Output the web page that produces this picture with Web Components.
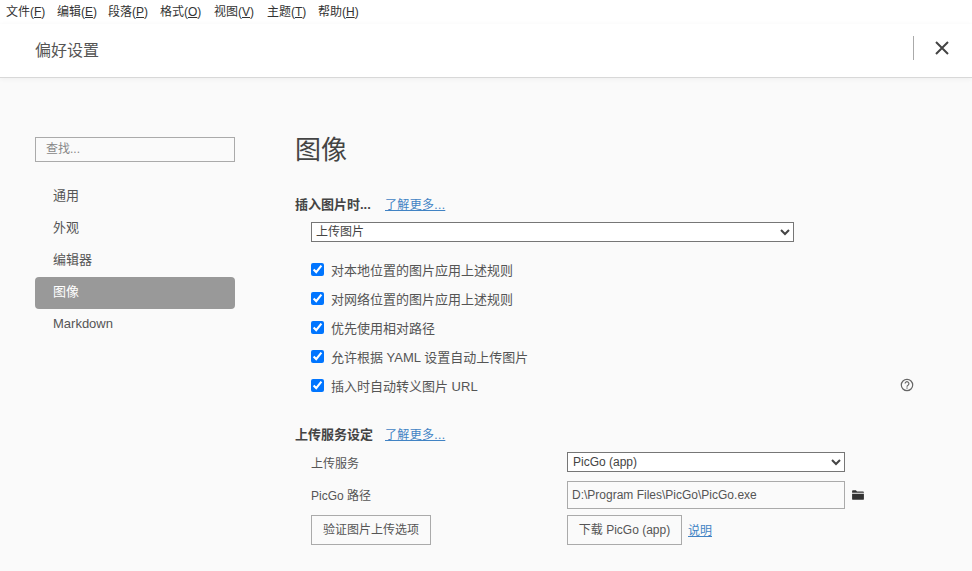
<!DOCTYPE html>
<html lang="zh"><head><meta charset="utf-8"><title>偏好设置</title>
<style>
html,body{margin:0;height:100%;overflow:hidden}
body{font-family:"Liberation Sans","Noto Sans CJK SC",sans-serif;color:#444;background:#fafafa}
</style></head><body>
<pref-app>
<app-menu><menu-item w="51" label="文件" key="F"></menu-item><menu-item w="51" label="编辑" key="E"></menu-item><menu-item w="52" label="段落" key="P"></menu-item><menu-item w="54" label="格式" key="O"></menu-item><menu-item w="53" label="视图" key="V"></menu-item><menu-item w="51" label="主题" key="T"></menu-item><menu-item w="50" label="帮助" key="H"></menu-item></app-menu>
<pref-header>偏好设置</pref-header>
<pref-body>
<pref-sidebar slot="side">
<nav-item>通用</nav-item><nav-item>外观</nav-item><nav-item>编辑器</nav-item><nav-item active>图像</nav-item><nav-item>Markdown</nav-item>
</pref-sidebar>
<pref-panel slot="main" title="图像">
<section-title link="了解更多...">插入图片时...</section-title>
<pref-select wide value="上传图片"></pref-select>
<check-list>
<check-row>对本地位置的图片应用上述规则</check-row>
<check-row>对网络位置的图片应用上述规则</check-row>
<check-row>优先使用相对路径</check-row>
<check-row>允许根据 YAML 设置自动上传图片</check-row>
<check-row help>插入时自动转义图片 URL</check-row>
</check-list>
<section-title link="了解更多...">上传服务设定</section-title>
<upload-form></upload-form>
</pref-panel>
</pref-body>
</pref-app>
<script>
function def(name,css,html){
  customElements.define(name,class extends HTMLElement{
    connectedCallback(){
      if(this.shadowRoot)return;
      const r=this.attachShadow({mode:'open'});
      r.innerHTML='<style>'+css+'</style>'+(typeof html==='function'?html(this):html);
    }
  });
}
def('pref-app',':host{display:flex;flex-direction:column;height:571px;overflow:hidden}','<slot></slot>');
def('app-menu',':host{display:flex;height:24px;align-items:center;padding-left:6px;background:#fff;color:#333;font-size:12px}','<slot></slot>');
def('menu-item',':host{display:block;white-space:nowrap;line-height:24px}div{white-space:nowrap}u{text-underline-offset:1px}',
  h=>`<div style="width:${h.getAttribute('w')}px">${h.getAttribute('label')}(<u>${h.getAttribute('key')}</u>)</div>`);
def('pref-header',`:host{display:flex;align-items:center;height:54px;box-sizing:border-box;padding:0 22px 0 35px;background:#fff;border-bottom:1px solid #d8d8d8;box-shadow:0 1px 5px rgba(0,0,0,.05);font-size:16px;color:#555;position:relative}
  .t{flex:1;margin-top:-4px}.sep{width:1px;height:24px;background:#aaa;margin-right:20px;margin-top:-5px}svg{display:block;margin-top:-5px}`,
  `<span class="t"><slot></slot></span><span class="sep"></span><svg width="16" height="16" viewBox="0 0 16 16"><path d="M2 2 14 14M14 2 2 14" stroke="#444" stroke-width="2" fill="none"/></svg>`);
def('pref-body',':host{display:flex;flex:1;min-height:0}.s{display:block;width:200px;margin-left:35px;padding-top:59px}.m{display:block;flex:1;margin-left:60px;padding-top:55px;min-width:0}',
  '<div class="s"><slot name="side"></slot></div><div class="m"><slot name="main"></slot></div>');
def('pref-sidebar',`:host{display:block}.q{box-sizing:border-box;height:25px;border:1px solid #aaa;line-height:23px;padding-left:10px;font-size:12px;color:#888;margin-bottom:19px}`,
  `<div class="q">查找...</div><slot></slot>`);
def('nav-item',`:host{display:block;height:32px;line-height:30px;padding-left:18px;font-size:13px;color:#555;border-radius:4px}
  :host([active]){background:#999;color:#fff}`,'<slot></slot>');
def('pref-panel',`:host{display:block}h1{margin:0 0 29px;font-weight:400;font-size:26px;line-height:34px;color:#444}`,
  h=>`<h1>${h.getAttribute('title')}</h1><slot></slot>`);
def('section-title',`:host{display:flex;gap:12px;font-size:13px;line-height:18px;height:18px;white-space:nowrap}b{font-weight:700;color:#444;min-width:78px}a{color:#4183c4;font-size:12px;letter-spacing:.33px;text-decoration:underline}`,
  h=>`<b><slot></slot></b><a>${h.getAttribute('link')}</a>`);
def('pref-select',`:host{display:block}select{display:block;box-sizing:border-box;width:278px;height:20px;padding:0;font:12px "Liberation Sans","Noto Sans CJK SC",sans-serif;color:#444;background:#fff;border:1px solid #767676;border-radius:0}
  :host([wide]){padding:8px 0 0 16px}:host([wide]) select{width:483px}`,
  h=>`<select><option>${h.getAttribute('value')}</option></select>`);
def('check-list',':host{display:block;padding:13px 0 26px 16px}','<slot></slot>');
def('check-row',`:host{display:flex;align-items:center;height:29px;font-size:13px;color:#555;width:603px}
  input{width:13px;height:13px;margin:0 7px 0 0;accent-color:#0075ff}
  span{flex:1}svg{display:block;margin-top:-2px}`,
  h=>`<input type="checkbox" checked><span><slot></slot></span>`+(h.hasAttribute('help')?`<svg width="14" height="14" viewBox="0 0 14 14"><circle cx="7" cy="7" r="5.7" fill="none" stroke="#666" stroke-width="1.2"/><path d="M5.1 5.6a1.9 1.9 0 1 1 2.9 1.6c-.7.4-1 .7-1 1.5" fill="none" stroke="#666" stroke-width="1.2"/><rect x="6.4" y="9.4" width="1.2" height="1.3" fill="#666"/></svg>`:''));
def('upload-form',`:host{display:grid;grid-template-columns:256px 1fr;padding:8px 0 0 16px;font-size:12px;color:#555;width:577px;align-items:center}
  .v{display:flex;align-items:center;gap:6px}
  .r1{margin-bottom:9px}.r2{margin-bottom:6px}.l2{margin-bottom:8px}
  select{display:block;box-sizing:border-box;width:278px;height:20px;padding:0 0 0 1px;font:12px "Liberation Sans","Noto Sans CJK SC",sans-serif;color:#444;background:#fff;border:1px solid #767676;border-radius:0}
  .path{box-sizing:border-box;width:278px;height:28px;line-height:26px;border:1px solid #aaa;padding-left:4px;color:#555}
  .btn{box-sizing:border-box;height:30px;line-height:29px;border:1px solid #aaa;text-align:center;color:#555}
  .b1{width:120px}.b2{width:115px}a{color:#4183c4;text-decoration:underline;margin-top:-2px}svg{margin-left:1px}`,
  `<div class="r1">上传服务</div><div class="v r1"><select><option>PicGo (app)</option></select></div>
   <div class="l2">PicGo 路径</div><div class="v r2"><div class="path">D:\\Program Files\\PicGo\\PicGo.exe</div><svg width="12" height="10" viewBox="0 0 13 11"><path d="M0 1.2C0 .6.4.2 1 .2h3.2l1.2 1.4H12c.6 0 1 .4 1 1V3H0zM0 4h13v5.8c0 .6-.4 1-1 1H1c-.6 0-1-.4-1-1z" fill="#333"/></svg></div>
   <div><div class="btn b1">验证图片上传选项</div></div><div class="v"><div class="btn b2">下载 PicGo (app)</div><a>说明</a></div>`);
</script>
</body></html>
